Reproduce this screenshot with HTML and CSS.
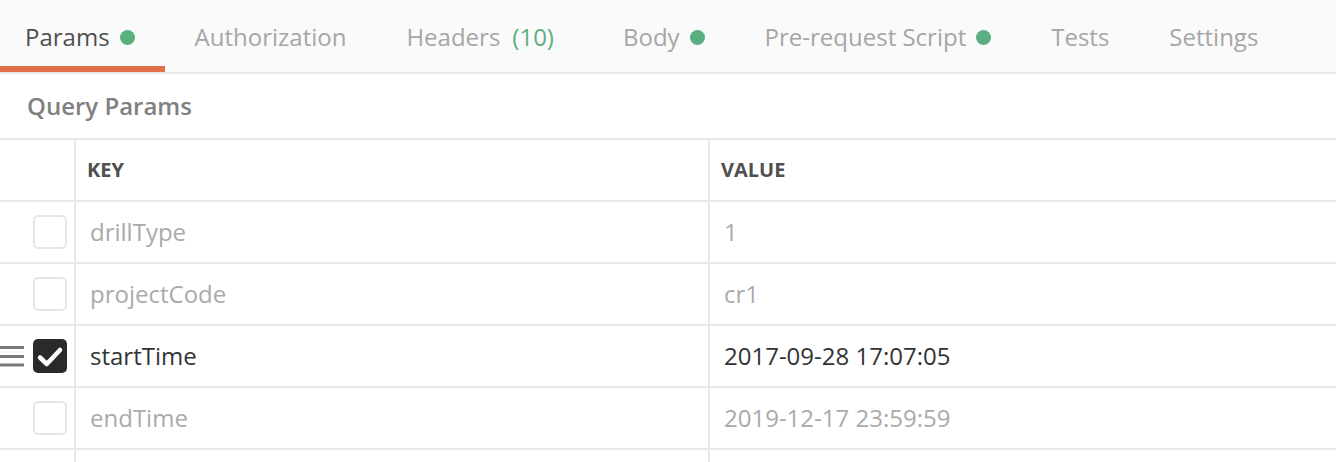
FILE: index.html
```html
<!DOCTYPE html>
<html lang="en">
<head>
<meta charset="utf-8">
<title>Params</title>
<link rel="stylesheet" href="styles.css">
</head>
<body>
<nav class="tabs">
  <div class="tab active"><span>Params</span><i class="dot"></i></div>
  <div class="tab"><span>Authorization</span></div>
  <div class="tab"><span>Headers</span><span class="count">(10)</span></div>
  <div class="tab"><span>Body</span><i class="dot"></i></div>
  <div class="tab"><span>Pre-request Script</span><i class="dot"></i></div>
  <div class="tab"><span>Tests</span></div>
  <div class="tab"><span>Settings</span></div>
</nav>
<section class="section">
  <h2 class="section-title">Query Params</h2>
  <div class="table">
    <div class="row head">
      <div class="cell check"></div>
      <div class="cell key">KEY</div>
      <div class="cell value">VALUE</div>
    </div>
    <div class="row off">
      <div class="cell check"><span class="handle"></span><span class="box"></span></div>
      <div class="cell key">drillType</div>
      <div class="cell value">1</div>
    </div>
    <div class="row off">
      <div class="cell check"><span class="handle"></span><span class="box"></span></div>
      <div class="cell key">projectCode</div>
      <div class="cell value">cr1</div>
    </div>
    <div class="row on">
      <div class="cell check">
        <span class="handle"><svg width="24" height="22" viewBox="0 0 24 22"><path d="M0 2.5H24M0 11.5H24M0 20H24" stroke="#7a7a7a" stroke-width="3"/></svg></span>
        <span class="box checked"><svg width="34" height="34" viewBox="0 0 34 34"><path d="M7 18.5L13.8 25L27 11" fill="none" stroke="#fff" stroke-width="4.5" stroke-linecap="round" stroke-linejoin="round"/></svg></span>
      </div>
      <div class="cell key">startTime</div>
      <div class="cell value">2017-09-28 17:07:05</div>
    </div>
    <div class="row off">
      <div class="cell check"><span class="handle"></span><span class="box"></span></div>
      <div class="cell key">endTime</div>
      <div class="cell value">2019-12-17 23:59:59</div>
    </div>
    <div class="row off last">
      <div class="cell check"></div>
      <div class="cell key"></div>
      <div class="cell value"></div>
    </div>
  </div>
</section>
</body>
</html>
```
FILE: styles.css
```css
* { box-sizing: border-box; margin: 0; padding: 0; }
html, body { background: #fff; }
body {
  font-family: "Open Sans", "Noto Sans", sans-serif;
  overflow: hidden;
  height: 462px;
}
.tabs {
  display: flex;
  height: 74px;
  background: #fafafa;
  border-bottom: 2px solid #e9e9e9;
}
.tab {
  display: flex;
  align-items: center;
  height: 72px;
  padding: 8px 30px 0 30px;
  font-size: 24px;
  line-height: 34px;
  color: #a6a6a6;
  border-bottom: 6px solid transparent;
}
.tab:first-child { padding-left: 25px; }
.tab.active {
  color: #505050;
  border-bottom-color: #e07048;
}
.dot {
  display: inline-block;
  width: 15px;
  height: 15px;
  border-radius: 50%;
  background: #5aaf80;
  margin-left: 10px;
  margin-top: 1px;
}
.count {
  color: #5aaf80;
  margin-left: 12px;
  margin-right: 9px;
}
.section-title {
  height: 64px;
  display: flex;
  align-items: center;
  padding-left: 27px;
  font-size: 24px;
  font-weight: 600;
  line-height: 34px;
  color: #808080;
}
.table { border-top: 2px solid #e9e9e9; }
.row {
  display: grid;
  grid-template-columns: 74px 634px 1fr;
  height: 62px;
  border-bottom: 2px solid #e9e9e9;
}
.row.last { height: 12px; border-bottom: none; }
.cell {
  display: flex;
  align-items: center;
  font-size: 24px;
  line-height: 34px;
}
.cell.key, .cell.value {
  border-left: 2px solid #e9e9e9;
  padding-left: 14px;
}
.head .cell {
  font-size: 20px;
  font-weight: 700;
  line-height: 28px;
  color: #505050;
}
.head .cell.key { padding-left: 11px; }
.head .cell.value { padding-left: 11px; }
.off .cell { color: #aaaaaa; }
.on .cell { color: #333333; }
.cell.check { gap: 9px; }
.handle {
  display: block;
  width: 24px;
  height: 22px;
}
.handle svg { display: block; }
.box {
  display: block;
  width: 34px;
  height: 34px;
  border: 2px solid #e6e6e6;
  border-radius: 5px;
  background: #fff;
}
.box.checked {
  border: none;
  background: #2a2a2a;
}
.box svg { display: block; }
```
